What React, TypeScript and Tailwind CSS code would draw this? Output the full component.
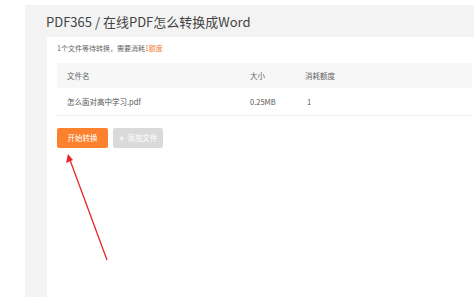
import React from "react";

const font = { fontFamily: '"Noto Sans CJK SC", "Noto Sans", sans-serif' };

export default function App() {
  return (
    <div className="relative w-[474px] h-[299px] bg-white pl-[25px] pt-[5px] pb-[2px]" style={font}>
      <div className="flex h-full flex-col bg-[#f3f3f3]">
        <div className="mt-[5px] mb-[3px] h-[24px] pl-[21px] text-[13px] leading-[24px] text-[#444]">
          PDF365 / 在线PDF怎么转换成Word
        </div>
        <div className="ml-[22px] flex flex-1 flex-col bg-white pl-[10px] pr-[2px]">
          <div className="mt-[6px] h-[10px] text-[7px] leading-[10px] text-[#666]">
            1个文件等待转换，需要消耗<span className="text-[#f47b3c]">1额度</span>
          </div>
          <div className="mt-[10px] flex h-[25px] items-center bg-[#f7f7f7] text-[7.5px] text-[#666]">
            <div className="w-[193px] pl-[10px]">文件名</div>
            <div className="w-[55px]">大小</div>
            <div>消耗额度</div>
          </div>
          <div className="flex h-[28px] items-center border-b border-[#efefef] text-[7.5px] text-[#555]">
            <div className="w-[193px] pl-[10px]">怎么面对高中学习.pdf</div>
            <div className="w-[55px]">0.25MB</div>
            <div className="pl-[2px]">1</div>
          </div>
          <div className="mt-[12px] flex gap-[5px]">
            <div className="flex h-[20px] w-[51px] items-center justify-center rounded-[2px] bg-[#fb812f] text-[7.5px] text-white">
              开始转换
            </div>
            <div className="flex h-[20px] w-[50px] items-center justify-center gap-[3px] rounded-[2px] bg-[#dadada] text-[7.5px] text-white">
              <span className="text-[10px] leading-none">+</span>
              <span>添加文件</span>
            </div>
          </div>
        </div>
      </div>
      <svg className="pointer-events-none absolute left-0 top-0" width="474" height="299">
        <line x1="107" y1="260" x2="70" y2="160" stroke="#e8262b" strokeWidth="1.3" />
        <polygon points="68,154 66,163 73,160" fill="#e8262b" />
      </svg>
    </div>
  );
}
